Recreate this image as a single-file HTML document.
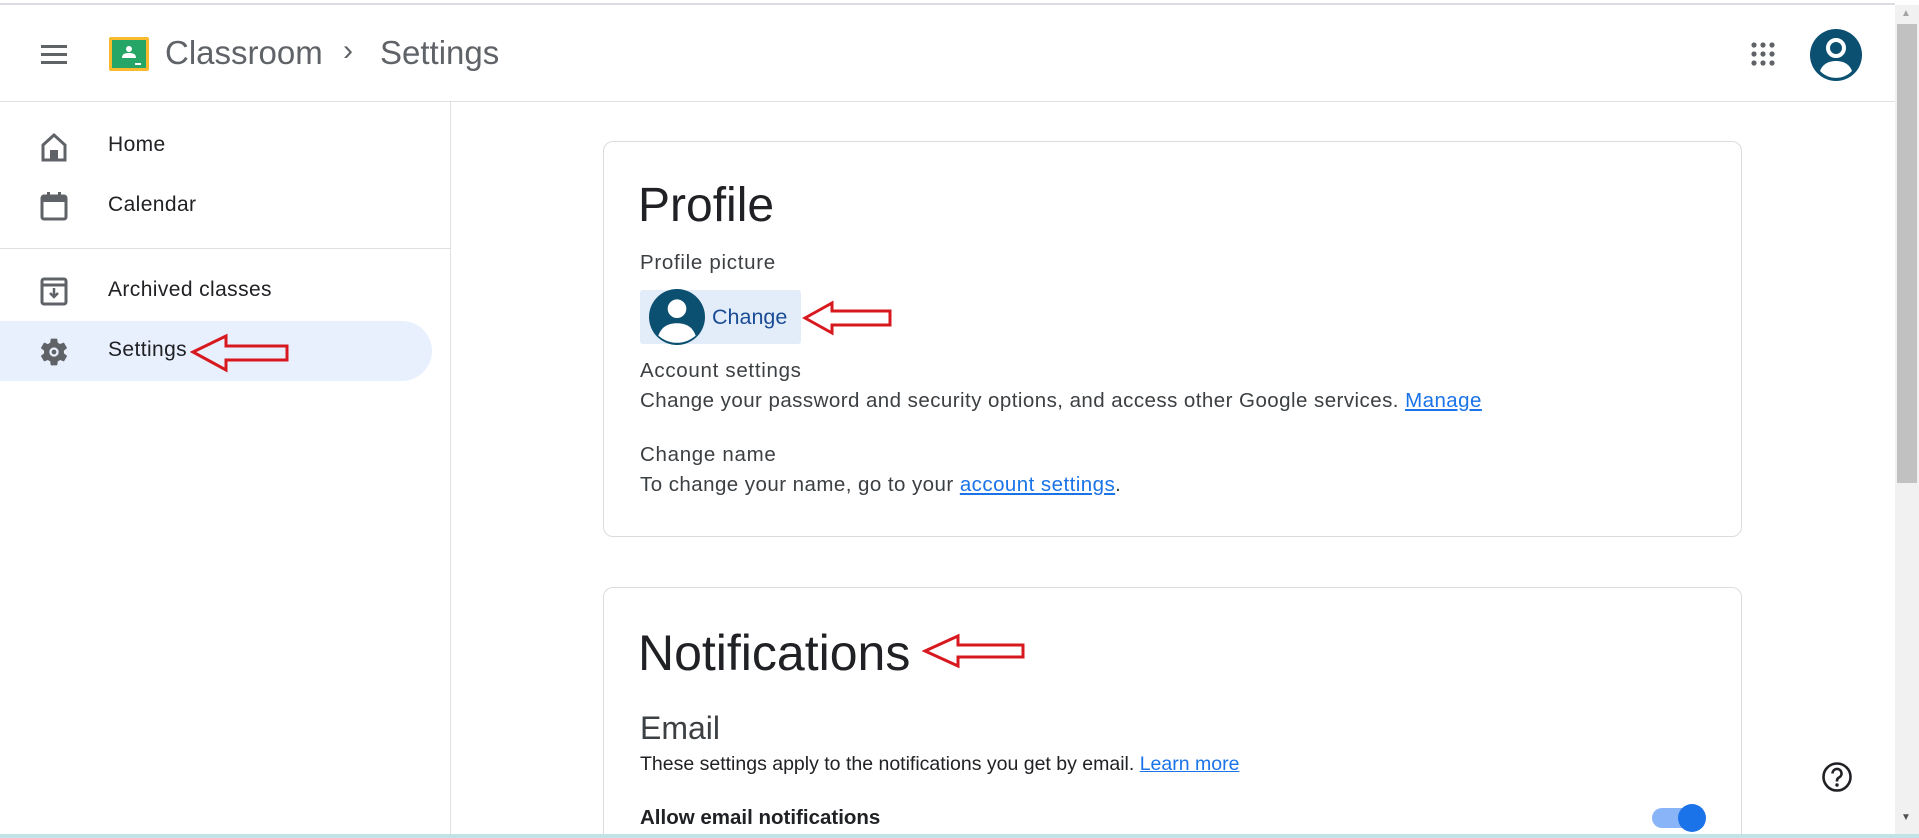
<!DOCTYPE html>
<html><head><meta charset="utf-8"><style>
*{margin:0;padding:0;box-sizing:border-box}
html,body{width:1919px;height:838px;overflow:hidden}
body{background:#fff;font-family:"Liberation Sans",Arial,sans-serif;color:#3c4043;position:relative}
.abs{position:absolute}
.t{position:absolute;white-space:nowrap}
a{color:#1a73e8;text-decoration:underline}
.side{font-size:21px;letter-spacing:0.4px;color:#202124}
.lab{font-size:20.5px;letter-spacing:0.7px;color:#3c4043}
.desc{font-size:20.5px;letter-spacing:0.45px;color:#3c4043}
</style></head><body>
<div class="abs" style="left:0;top:3px;width:1895px;height:2px;background:#dadce0"></div>
<div class="abs" style="left:0;top:101px;width:1895px;height:1px;background:#e0e0e0"></div>
<div class="abs" style="left:41px;top:45px;width:26px;height:3px;background:#5f6368"></div>
<div class="abs" style="left:41px;top:53px;width:26px;height:3px;background:#5f6368"></div>
<div class="abs" style="left:41px;top:61px;width:26px;height:3px;background:#5f6368"></div>
<svg class="abs" style="left:109px;top:37px" width="40" height="34" viewBox="0 0 40 34"><rect x="0" y="0" width="40" height="34" rx="2" fill="#f9bb2d"/><rect x="3" y="3" width="34" height="28" fill="#25a667"/><circle cx="20" cy="12" r="3" fill="#fff"/><path d="M13 21c0-4 3-5 7-5s7 1 7 5z" fill="#fff"/><rect x="26" y="26" width="6" height="2" fill="#fff"/></svg>
<div class="t" style="left:165px;top:34px;font-size:33px;color:#5f6368">Classroom</div>
<div class="t" style="left:343px;top:34px;font-size:30px;color:#5f6368">›</div>
<div class="t" style="left:380px;top:34px;font-size:33px;color:#5f6368">Settings</div>
<svg class="abs" style="left:1750px;top:41px" width="26" height="26"><g fill="#5f6368"><circle cx="4" cy="4" r="2.6"/><circle cx="13" cy="4" r="2.6"/><circle cx="22" cy="4" r="2.6"/><circle cx="4" cy="13" r="2.6"/><circle cx="13" cy="13" r="2.6"/><circle cx="22" cy="13" r="2.6"/><circle cx="4" cy="22" r="2.6"/><circle cx="13" cy="22" r="2.6"/><circle cx="22" cy="22" r="2.6"/></g></svg>
<svg class="abs" style="left:1809px;top:28px" width="54" height="54" viewBox="0 0 54 54"><circle cx="27" cy="27" r="26" fill="#0b4f71"/><circle cx="27" cy="20" r="8" fill="none" stroke="#fff" stroke-width="4"/><path d="M11 43c3-8 10-10 16-10s13 2 16 10a22 22 0 0 1-32 0z" fill="#fff"/></svg>
<div class="abs" style="left:1895px;top:5px;width:24px;height:830px;background:#f1f1f1"></div>
<div class="abs" style="left:1897px;top:24px;width:20px;height:459px;background:#c1c1c1"></div>
<div class="t" style="left:1901px;top:8px;font-size:10px;color:#a3a3a3">▲</div>
<div class="t" style="left:1901px;top:812px;font-size:10px;color:#505050">▼</div>
<div class="abs" style="left:450px;top:102px;width:1px;height:736px;background:#e0e0e0"></div>
<div class="abs" style="left:0;top:248px;width:450px;height:1px;background:#e0e0e0"></div>
<div class="abs" style="left:0;top:321px;width:432px;height:60px;background:#e8f0fe;border-radius:0 30px 30px 0"></div>
<svg class="abs" style="left:40px;top:132px" width="28" height="30" viewBox="0 0 28 30"><path d="M3 13L14 3l11 10v15H3z" fill="none" stroke="#5f6368" stroke-width="3"/><rect x="10" y="18" width="8" height="10" fill="#5f6368"/></svg>
<svg class="abs" style="left:40px;top:191px" width="28" height="30" viewBox="0 0 28 30"><rect x="2" y="5" width="24" height="23" rx="2" fill="none" stroke="#5f6368" stroke-width="3"/><rect x="2" y="5" width="24" height="6" fill="#5f6368"/><rect x="7" y="1" width="3" height="5" fill="#5f6368"/><rect x="18" y="1" width="3" height="5" fill="#5f6368"/></svg>
<svg class="abs" style="left:40px;top:276px" width="28" height="30" viewBox="0 0 28 30"><rect x="2" y="3" width="24" height="25" rx="2" fill="none" stroke="#5f6368" stroke-width="3"/><line x1="2" y1="9" x2="26" y2="9" stroke="#5f6368" stroke-width="3"/><path d="M14 12v9M10 17l4 4 4-4" fill="none" stroke="#5f6368" stroke-width="2.5"/></svg>
<svg class="abs" style="left:38px;top:336px" width="32" height="32" viewBox="0 0 24 24"><path fill="#5f6368" d="M19.4 13c.04-.3.06-.65.06-1s-.02-.7-.07-1l2.1-1.65c.2-.15.24-.42.12-.64l-2-3.46c-.12-.22-.39-.3-.61-.22l-2.49 1c-.52-.4-1.08-.73-1.69-.98l-.38-2.65A.49.49 0 0 0 14 2h-4c-.25 0-.46.18-.49.42l-.38 2.65c-.61.25-1.17.59-1.69.98l-2.49-1c-.23-.09-.49 0-.61.22l-2 3.46c-.13.22-.07.49.12.64L4.57 11c-.04.32-.07.66-.07 1s.02.68.07 1l-2.11 1.65c-.19.15-.24.42-.12.64l2 3.46c.12.22.39.3.61.22l2.49-1c.52.4 1.08.73 1.69.98l.38 2.65c.03.24.24.42.49.42h4c.25 0 .46-.18.49-.42l.38-2.65c.61-.25 1.17-.59 1.69-.98l2.49 1c.23.09.49 0 .61-.22l2-3.46c.12-.22.07-.49-.12-.64L19.4 13zM12 15.5a3.5 3.5 0 1 1 0-7 3.5 3.5 0 0 1 0 7zm0-5.3a1.8 1.8 0 1 0 0 3.6 1.8 1.8 0 0 0 0-3.6z" fill-rule="evenodd"/></svg>
<div class="t side" style="left:108px;top:133px">Home</div>
<div class="t side" style="left:108px;top:193px">Calendar</div>
<div class="t side" style="left:108px;top:278px">Archived classes</div>
<div class="t side" style="left:108px;top:338px">Settings</div>
<svg class="abs" style="left:190px;top:333px" width="102" height="40" viewBox="0 0 102 40"><path d="M3 19L36 3v10h61v14H36v10z" fill="none" stroke="#d7191f" stroke-width="3"/></svg>
<div class="abs" style="left:603px;top:141px;width:1139px;height:396px;border:1px solid #dadce0;border-radius:10px"></div>
<div class="t" style="left:638px;top:178px;font-size:48px;color:#202124">Profile</div>
<div class="t lab" style="left:640px;top:251px">Profile picture</div>
<div class="abs" style="left:640px;top:290px;width:161px;height:54px;background:#e3edf9;border-radius:3px"></div>
<svg class="abs" style="left:649px;top:289px" width="56" height="56" viewBox="0 0 54 54"><circle cx="27" cy="27" r="27" fill="#0b4f71"/><circle cx="27" cy="19" r="9" fill="#fff"/><path d="M9 45c3-9 10-12 18-12s15 3 18 12a27 27 0 0 1-36 0z" fill="#fff"/></svg>
<div class="t" style="left:712px;top:305px;font-size:21.5px;color:#1a4c96">Change</div>
<svg class="abs" style="left:802px;top:300px" width="92" height="36" viewBox="0 0 92 36"><path d="M3 18L30 3v8h58v14H30v8z" fill="none" stroke="#d7191f" stroke-width="3"/></svg>
<div class="t lab" style="left:640px;top:359px">Account settings</div>
<div class="t desc" style="left:640px;top:389px">Change your password and security options, and access other Google services. <a>Manage</a></div>
<div class="t lab" style="left:640px;top:443px">Change name</div>
<div class="t desc" style="left:640px;top:473px">To change your name, go to your <a>account settings</a>.</div>
<div class="abs" style="left:603px;top:587px;width:1139px;height:251px;border:1px solid #dadce0;border-bottom:none;border-radius:10px 10px 0 0"></div>
<div class="t" style="left:638px;top:624px;font-size:50px;color:#202124">Notifications</div>
<svg class="abs" style="left:922px;top:632px" width="106" height="38" viewBox="0 0 106 38"><path d="M3 19L36 4v9h65v12H36v9z" fill="none" stroke="#d7191f" stroke-width="3"/></svg>
<div class="t" style="left:640px;top:710px;font-size:32px;color:#3c4043">Email</div>
<div class="t" style="left:640px;top:753px;font-size:19.5px;color:#202124">These settings apply to the notifications you get by email. <a>Learn more</a></div>
<div class="t" style="left:640px;top:806px;font-size:20.5px;color:#202124;font-weight:bold">Allow email notifications</div>
<div class="abs" style="left:1652px;top:808px;width:44px;height:20px;background:#8ab4f8;border-radius:10px"></div>
<div class="abs" style="left:1678px;top:804px;width:28px;height:28px;background:#1a73e8;border-radius:50%"></div>
<svg class="abs" style="left:1821px;top:761px" width="32" height="32" viewBox="0 0 32 32"><circle cx="16" cy="16" r="13.5" fill="none" stroke="#202124" stroke-width="2.6"/><path d="M11.5 12.5a4.5 4.5 0 1 1 6.5 4c-1.5.8-2 1.6-2 3v1" fill="none" stroke="#202124" stroke-width="2.6"/><circle cx="16" cy="24" r="1.7" fill="#202124"/></svg>
<div class="abs" style="left:0;top:834px;width:1919px;height:4px;background:#bfe3e6"></div>
</body></html>
